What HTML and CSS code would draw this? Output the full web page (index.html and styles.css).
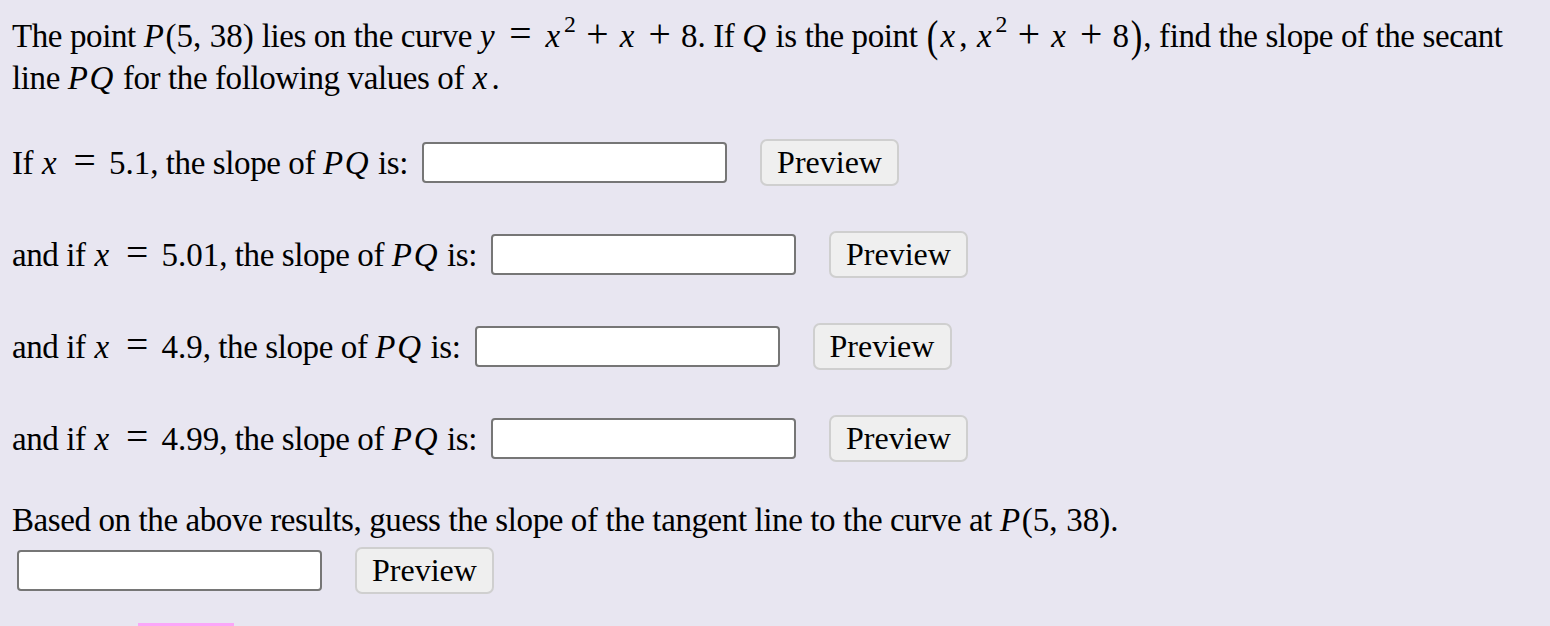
FILE: index.html
```html
<!DOCTYPE html>
<html>
<head>
<meta charset="utf-8">
<title>Secant slopes</title>
<link rel="stylesheet" href="styles.css">
</head>
<body>
<div class="page">
  <p class="intro">The point <span class="m"><i class="v">P</i>(5,<span class="th"></span>38)</span> lies on the curve <span class="m"><i class="v">y</i><span class="rel">=</span><i class="v vx">x</i><sup>2</sup><span class="bin">+</span><i class="v vx">x</i><span class="bin">+</span>8</span>. If <span class="m"><i class="v">Q</i></span> is the point <span class="m"><span class="big">(</span><i class="v vx">x</i>,<span class="th"></span><i class="v vx">x</i><sup>2</sup><span class="bin">+</span><i class="v vx">x</i><span class="bin">+</span>8<span class="big">)</span></span>, find the slope of the secant<br>line <span class="m"><i class="v">P</i><i class="v">Q</i></span> for the following values of <span class="m"><i class="v vx">x</i></span>.</p>

  <div class="row first">
    <span class="label">If <span class="m"><i class="v vx">x</i><span class="rel">=</span>5.1</span>, the slope of <span class="m"><i class="v">P</i><i class="v">Q</i></span> is:</span>
    <input class="answer" type="text">
    <button class="preview" type="button">Preview</button>
  </div>

  <div class="row">
    <span class="label">and if <span class="m"><i class="v vx">x</i><span class="rel">=</span>5.01</span>, the slope of <span class="m"><i class="v">P</i><i class="v">Q</i></span> is:</span>
    <input class="answer" type="text">
    <button class="preview" type="button">Preview</button>
  </div>

  <div class="row">
    <span class="label">and if <span class="m"><i class="v vx">x</i><span class="rel">=</span>4.9</span>, the slope of <span class="m"><i class="v">P</i><i class="v">Q</i></span> is:</span>
    <input class="answer" type="text">
    <button class="preview" type="button">Preview</button>
  </div>

  <div class="row">
    <span class="label">and if <span class="m"><i class="v vx">x</i><span class="rel">=</span>4.99</span>, the slope of <span class="m"><i class="v">P</i><i class="v">Q</i></span> is:</span>
    <input class="answer" type="text">
    <button class="preview" type="button">Preview</button>
  </div>

  <p class="guess">Based on the above results, guess the slope of the tangent line to the curve at <span class="m"><i class="v">P</i>(5,<span class="th"></span>38)</span>.</p>

  <div class="row last">
    <input class="answer solo" type="text">
    <button class="preview" type="button">Preview</button>
  </div>

  <div class="submit-edge"></div>
</div>
</body>
</html>
```

FILE: styles.css
```css
html {
  background: #e8e6f1;
}
body {
  margin: 0;
  background: #e8e6f1;
  color: #000;
  font-family: "Liberation Serif", "Times New Roman", serif;
  font-size: 33px;
  letter-spacing: -0.4px;
  overflow: hidden;
}
.page {
  padding: 15px 0 0 12px;
  height: 611px;
  overflow: hidden;
}
.intro {
  margin: 0;
  line-height: 42px;
  white-space: nowrap;
}
.m {
  white-space: nowrap;
  letter-spacing: 0;
}
.v {
  font-style: italic;
  margin-right: 0.05em;
}
.vx {
  margin-left: 0.03em;
  margin-right: 0.12em;
}
.th {
  display: inline-block;
  width: 0.26em;
}
.rel {
  display: inline-block;
  width: 0.66em;
  margin: 0 0.28em;
  text-align: center;
  font-size: 1.2em;
  line-height: 1;
}
.bin {
  display: inline-block;
  width: 0.66em;
  margin: 0 0.21em;
  text-align: center;
  font-size: 1.2em;
  line-height: 1;
}
sup {
  font-size: 0.72em;
  line-height: 0;
  vertical-align: 0.64em;
}
.big {
  display: inline-block;
  transform: scale(1.05, 1.32);
  margin: 0 0.05em;
}
.row {
  display: flex;
  align-items: center;
  height: 50px;
  margin-top: 42px;
}
.row.first {
  margin-top: 38px;
}
.label {
  white-space: nowrap;
}
.answer {
  box-sizing: border-box;
  width: 305px;
  height: 41px;
  margin: 0 33px 0 14px;
  border: 2px solid #767676;
  border-radius: 4px;
  background: #fff;
  padding: 0 6px;
  font-family: "Liberation Serif", serif;
  font-size: 28px;
}
.answer.solo {
  margin-left: 5px;
}
.preview {
  box-sizing: border-box;
  height: 47px;
  width: 139px;
  padding: 0;
  border: 2px solid #cfcfcf;
  border-radius: 7px;
  background: #efefef;
  color: #000;
  font-family: "Liberation Serif", "Times New Roman", serif;
  font-size: 32px;
  letter-spacing: 0;
  line-height: 37px;
}
.guess {
  margin: 36px 0 0 0;
  line-height: 42px;
  white-space: nowrap;
}
.row.last {
  margin-top: 4px;
}
.submit-edge {
  margin: 28px 0 0 126px;
  width: 96px;
  height: 12px;
  background: #fba6f8;
}
```
